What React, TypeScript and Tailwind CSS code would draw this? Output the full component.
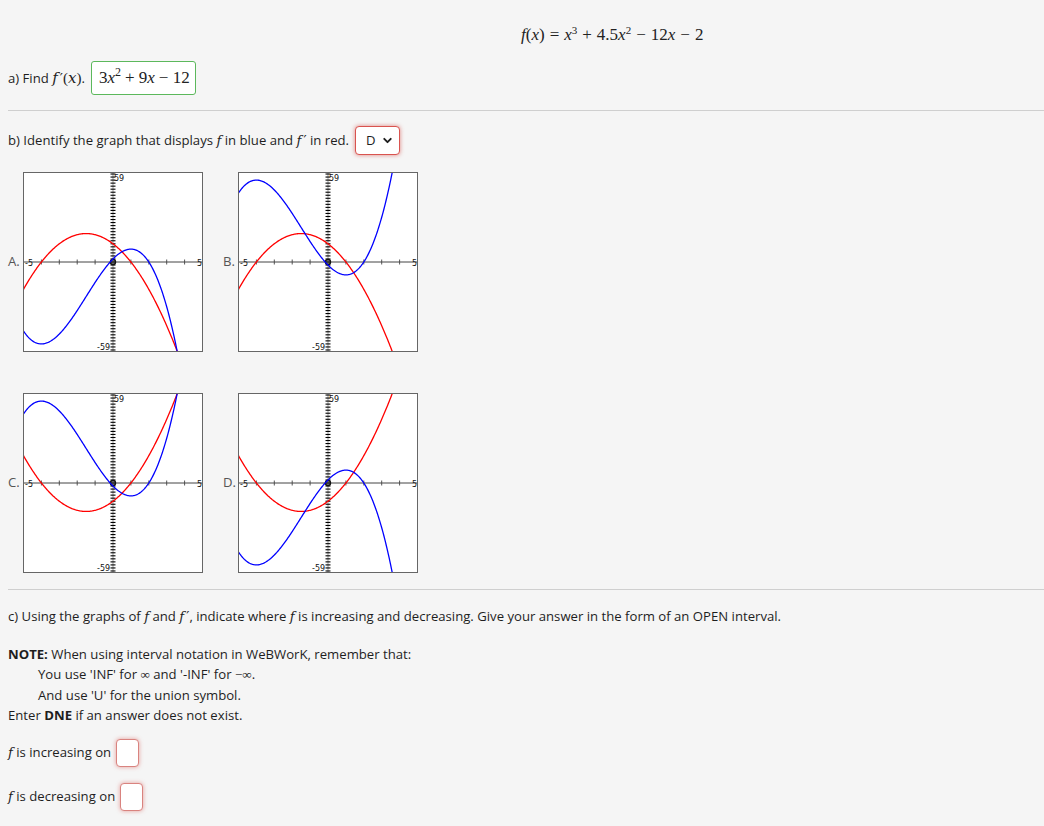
import React from "react";
import { ChevronDown } from "lucide-react";

const f = (x: number) => x ** 3 + 4.5 * x ** 2 - 12 * x - 2;
const fp = (x: number) => 3 * x * x + 9 * x - 12;

const W = 180;
const toPx = (x: number) => ((x + 5) / 10) * (W - 1) + 0.5;
const toPy = (y: number) => 90 - y * (89.5 / 59);

function pathFor(fn: (x: number) => number) {
  let d = "";
  for (let i = 0; i <= 240; i++) {
    const x = -5 + (10 * i) / 240;
    const y = fn(x);
    d += (i ? "L" : "M") + toPx(x).toFixed(2) + " " + toPy(y).toFixed(2);
  }
  return d;
}

function Graph({ blue, red }: { blue: (x: number) => number; red: (x: number) => number }) {
  const xt: number[] = [];
  for (let k = -5; k <= 5; k++) xt.push(k);
  const yt: number[] = [];
  for (let k = -58; k <= 58; k += 2) yt.push(k);
  return (
    <svg width={180} height={180} viewBox="0 0 180 180" className="block shrink-0 bg-white">
      <g stroke="#555" strokeWidth={1}>
        {xt.map((k) => (
          <line key={"x" + k} x1={toPx(k)} x2={toPx(k)} y1={87.5} y2={92.5} />
        ))}
      </g>
      <line x1={0} x2={180} y1={90} y2={90} stroke="#444" strokeWidth={1} />
      <line x1={90} x2={90} y1={0} y2={180} stroke="#999" strokeWidth={1} />
      <g stroke="#000" strokeWidth={1.1}>
        {yt.map((k) => (
          <line key={"y" + k} x1={87.5} x2={92.5} y1={toPy(k)} y2={toPy(k)} />
        ))}
      </g>
      <g fontFamily="'DejaVu Sans', sans-serif" fontSize={8} fill="#111">
        <text x={2} y={94}>-5</text>
        <text x={174} y={94}>5</text>
        <text x={91} y={9}>59</text>
        <text x={74} y={178}>-59</text>
        <circle cx={90} cy={90} r={2.5} fill="none" stroke="#111" strokeWidth={1.4} />
      </g>
      <path d={pathFor(red)} fill="none" stroke="#ff0000" strokeWidth={1.3} />
      <path d={pathFor(blue)} fill="none" stroke="#0000ff" strokeWidth={1.3} />
      <rect x={0.5} y={0.5} width={179} height={179} fill="none" stroke="#666" strokeWidth={1} />
    </svg>
  );
}

const nf = (x: number) => -f(x);
const nfp = (x: number) => -fp(x);

const serif = { fontFamily: "'Liberation Serif', serif" };
const dserif = { fontFamily: "'DejaVu Serif', serif" };

const M = ({ children }: { children: React.ReactNode }) => (
  <span className="italic" style={dserif}>
    {children}
  </span>
);

const Prime = () => (
  <span className="ml-[2px] text-[14px]" style={{ fontFamily: "'DejaVu Sans', sans-serif" }}>
    ′
  </span>
);

export default function App() {
  return (
    <div
      className="min-h-[826px] w-[1044px] bg-[#f5f5f5] text-[13.15px] text-[#1e1e1e]"
      style={{ fontFamily: "'Open Sans', 'Noto Sans', sans-serif" }}
    >
      <div className="px-2 pt-[23px]">
        <div className="ml-[513px] flex h-[24px] items-center text-[17px] text-[#222]" style={serif}>
          <i>f</i>(<i>x</i>)<span className="mx-[5px]">=</span>
          <i>x</i>
          <sup className="text-[11px]">3</sup>
          <span className="mx-[5px]">+</span>4.5<i>x</i>
          <sup className="text-[11px]">2</sup>
          <span className="mx-[5px]">−</span>12<i>x</i>
          <span className="mx-[5px]">−</span>2
        </div>

        <div className="mt-[14px] flex items-center">
          <span>
            a) Find{" "}
            <span className="text-[15px]">
              <M>f</M>
              <Prime />
              <span style={serif}>(</span>
              <M>x</M>
              <span style={serif}>)</span>
            </span>
            .
          </span>
          <div
            className="ml-[6px] flex h-[34px] w-[105px] items-center rounded-[3px] border border-[#5cb85c] bg-white pl-[7px] text-[17px] text-[#222]"
            style={serif}
          >
            3<i>x</i>
            <sup className="text-[12px]">2</sup>
            <span className="ml-[4px]">+ 9</span>
            <i>x</i>
            <span className="ml-[4px]">− 12</span>
          </div>
        </div>
      </div>

      <div className="ml-2 mt-[15px] border-t border-[#cfcfcf]" />

      <div className="px-2">
        <div className="mt-[15px] flex items-center">
          <span>
            b) Identify the graph that displays <M>f</M> in blue and <M>f</M>
            <Prime /> in red.
          </span>
          <div className="ml-[6px] flex h-[29px] w-[45px] items-center justify-between rounded-[4px] border border-[#d9534f] bg-white pl-[10px] pr-[5px] shadow-[0_0_4px_rgba(217,83,79,0.7)]">
            <span>D</span>
            <ChevronDown size={13} strokeWidth={3.5} />
          </div>
        </div>

        <div className="mt-[17px] flex flex-col gap-[41px]">
          <div className="flex items-center">
            <span className="w-[15px] text-[#555]">A.</span>
            <Graph blue={nf} red={nfp} />
            <span className="ml-[20px] w-[15px] text-[#555]">B.</span>
            <Graph blue={f} red={nfp} />
          </div>
          <div className="flex items-center">
            <span className="w-[15px] text-[#555]">C.</span>
            <Graph blue={f} red={fp} />
            <span className="ml-[20px] w-[15px] text-[#555]">D.</span>
            <Graph blue={nf} red={fp} />
          </div>
        </div>
      </div>

      <div className="ml-2 mt-[16px] border-t border-[#cfcfcf]" />

      <div className="px-2">
        <p className="mt-[16px] leading-[20px]">
          c) Using the graphs of <M>f</M> and <M>f</M>
          <Prime />, indicate where <M>f</M> is increasing and decreasing. Give your answer in the form of
          an OPEN interval.
        </p>

        <div className="mt-[17px] leading-[20px]">
          <p>
            <b>NOTE:</b> When using interval notation in WeBWorK, remember that:
          </p>
          <p className="pl-[30px]">
            You use 'INF' for <span style={serif}>∞</span> and '-INF' for <span style={serif}>−∞</span>.
          </p>
          <p className="pl-[30px]">And use 'U' for the union symbol.</p>
          <p>
            Enter <b>DNE</b> if an answer does not exist.
          </p>
        </div>

        <div className="mt-[14px] flex items-center">
          <span>
            <M>f</M> is increasing on
          </span>
          <div className="ml-[5px] h-[28px] w-[23px] rounded-[4px] border border-[#d9837f] bg-white shadow-[0_0_4px_rgba(217,83,79,0.55)]" />
        </div>
        <div className="mt-[16px] flex items-center">
          <span>
            <M>f</M> is decreasing on
          </span>
          <div className="ml-[5px] h-[28px] w-[23px] rounded-[4px] border border-[#d9837f] bg-white shadow-[0_0_4px_rgba(217,83,79,0.55)]" />
        </div>
      </div>
    </div>
  );
}
